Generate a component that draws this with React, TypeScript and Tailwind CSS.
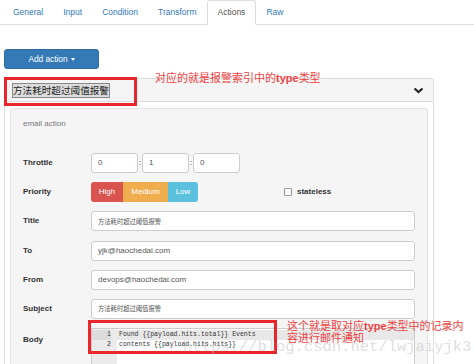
import React from 'react';

const tabs = ['General', 'Input', 'Condition', 'Transform', 'Actions', 'Raw'];

const sans = "font-['Liberation_Sans','Noto_Sans_CJK_SC',sans-serif]";

function Field({ label, value, cjk }: { label: string; value: string; cjk?: boolean }) {
  return (
    <div className="flex items-center h-[20px]">
      <div className="w-[68px] text-[8px] font-bold text-[#333]">{label}</div>
      <div className="flex-1 h-[20px] bg-white border border-[#ccc] rounded-[3px] flex items-center px-[6px]">
        <span className={cjk ? 'text-[6.3px] text-[#555]' : 'text-[8px] text-[#555]'}>{value}</span>
      </div>
    </div>
  );
}

export default function App() {
  return (
    <div className={`relative w-[474px] h-[364px] overflow-hidden bg-white ${sans}`}>
      {/* Tabs */}
      <div className="flex pl-[3px] h-[25px] border-b border-[#ddd]">
        {tabs.map((t) => (
          <div
            key={t}
            className={
              t === 'Actions'
                ? 'h-[25px] px-[10px] flex items-center text-[8.5px] text-[#555] bg-white border border-[#ddd] border-b-white rounded-t-[3px] -mb-px'
                : 'h-[25px] px-[10px] flex items-center text-[8.5px] text-[#337ab7]'
            }
          >
            {t}
          </div>
        ))}
      </div>

      {/* Add action */}
      <div className="mt-[24px] ml-[4px] w-[95px] h-[20px] bg-[#337ab7] border border-[#2e6da4] rounded-[3px] flex items-center justify-center gap-[3px] text-white text-[8.3px]">
        Add action
        <span className="inline-block w-0 h-0 border-x-[2.5px] border-x-transparent border-t-[3px] border-t-white" />
      </div>

      {/* Panel */}
      <div className="mt-[9px] ml-[4px] w-[430px]">
        <div className="h-[24px] bg-[#f5f5f5] border border-[#ddd] rounded-t-[3px] flex items-center justify-between pl-[7px] pr-[9px]">
          <div className="w-[98px] h-[15px] bg-[#dcdcdc] border border-[#8a8a8a] flex items-center overflow-hidden">
            <span className="text-[9.6px] leading-[13px] text-[#222] whitespace-nowrap">方法耗时超过阈值报警</span>
          </div>
          <svg width="11" height="7" viewBox="0 0 11 7">
            <path d="M1.5 1.5 L5.5 5 L9.5 1.5" fill="none" stroke="#222" strokeWidth="2.2" />
          </svg>
        </div>
        <div className="border-x border-[#ddd] px-[5px] pt-[6px]">
          <div className="bg-[#f5f5f5] border border-[#e3e3e3] rounded-[3px] px-[12px] pt-[10px] pb-[10px]">
            <div className="text-[8px] leading-[10px] text-[#777]">email action</div>

            <div className="mt-[24px] flex flex-col gap-[9.2px]">
              {/* Throttle */}
              <div className="flex items-center h-[20px]">
                <div className="w-[68px] text-[8px] font-bold text-[#333]">Throttle</div>
                {['0', '1', '0'].map((v, i) => (
                  <React.Fragment key={i}>
                    {i > 0 && <span className="w-[4px] text-center text-[8px] text-[#333]">:</span>}
                    <div className="w-[47px] h-[20px] bg-white border border-[#ccc] rounded-[3px] flex items-center px-[6px] text-[8px] text-[#555]">
                      {v}
                    </div>
                  </React.Fragment>
                ))}
              </div>

              {/* Priority */}
              <div className="flex items-center h-[20px]">
                <div className="w-[68px] text-[8px] font-bold text-[#333]">Priority</div>
                <div className="flex h-[20px] text-[8px] text-white">
                  <div className="w-[32px] bg-[#d9534f] rounded-l-[3px] flex items-center justify-center">High</div>
                  <div className="w-[45px] bg-[#f0ad4e] flex items-center justify-center">Medium</div>
                  <div className="w-[30px] bg-[#5bc0de] rounded-r-[3px] flex items-center justify-center">Low</div>
                </div>
                <div className="ml-[86px] flex items-center gap-[5px]">
                  <span className="w-[8px] h-[8px] border border-[#999] bg-white rounded-[1px]" />
                  <span className="text-[8px] font-bold text-[#333]">stateless</span>
                </div>
              </div>

              <Field label="Title" value="方法耗时超过阈值报警" cjk />
              <Field label="To" value="yjk@haochedai.com" />
              <Field label="From" value="devops@haochedai.com" />
              <Field label="Subject" value="方法耗时超过阈值报警" cjk />

              {/* Body */}
              <div className="flex items-start">
                <div className="w-[68px] pt-[6px] text-[8px] font-bold text-[#333]">Body</div>
                <div className="flex-1 h-[40px] bg-white border border-[#ccc] flex font-['Liberation_Mono',monospace] text-[6.5px] leading-[10px] text-[#333]">
                  <div className="w-[25px] bg-[#ebebeb] pt-[1px] pr-[6px] text-right text-[#333]">
                    <div className="bg-[#dcdcdc]">1</div>
                    <div>2</div>
                  </div>
                  <div className="flex-1 pt-[1px]">
                    <div className="bg-[#e8e8e8] pl-[2px]">Found {'{{payload.hits.total}}'} Events</div>
                    <div className="pl-[2px]">contents {'{{payload.hits.hits}}'}</div>
                  </div>
                </div>
              </div>
            </div>
          </div>
        </div>
      </div>

      {/* Annotations */}
      <div className="absolute left-[4px] top-[77px] w-[133px] h-[29px] border-[3px] border-[#e8262b]" />
      <div className="absolute left-[155px] top-[71px] text-[11px] leading-[14px] text-[#f04040] font-['Liberation_Serif','Noto_Sans_CJK_SC',serif] whitespace-nowrap">
        对应的就是报警索引中的<span className="font-bold font-['Liberation_Sans',sans-serif]">type</span>类型
      </div>
      <div className="absolute left-[88px] top-[320px] w-[189px] h-[34px] border-[3px] border-[#e8262b]" />
      <div className="absolute left-[287px] top-[320px] text-[11px] leading-[12px] text-[#f04040] font-['Liberation_Serif','Noto_Sans_CJK_SC',serif] whitespace-nowrap">
        <div>
          这个就是取对应<span className="font-bold font-['Liberation_Sans',sans-serif]">type</span>类型中的记录内
        </div>
        <div>容进行邮件通知</div>
      </div>
      <div className="absolute left-[183px] top-[337px] text-[15.5px] leading-[20px] text-[#bdbdbd]/50 font-['Liberation_Mono',monospace] whitespace-nowrap">
        https://blog.csdn.net/lwjaiyjk3
      </div>
    </div>
  );
}
